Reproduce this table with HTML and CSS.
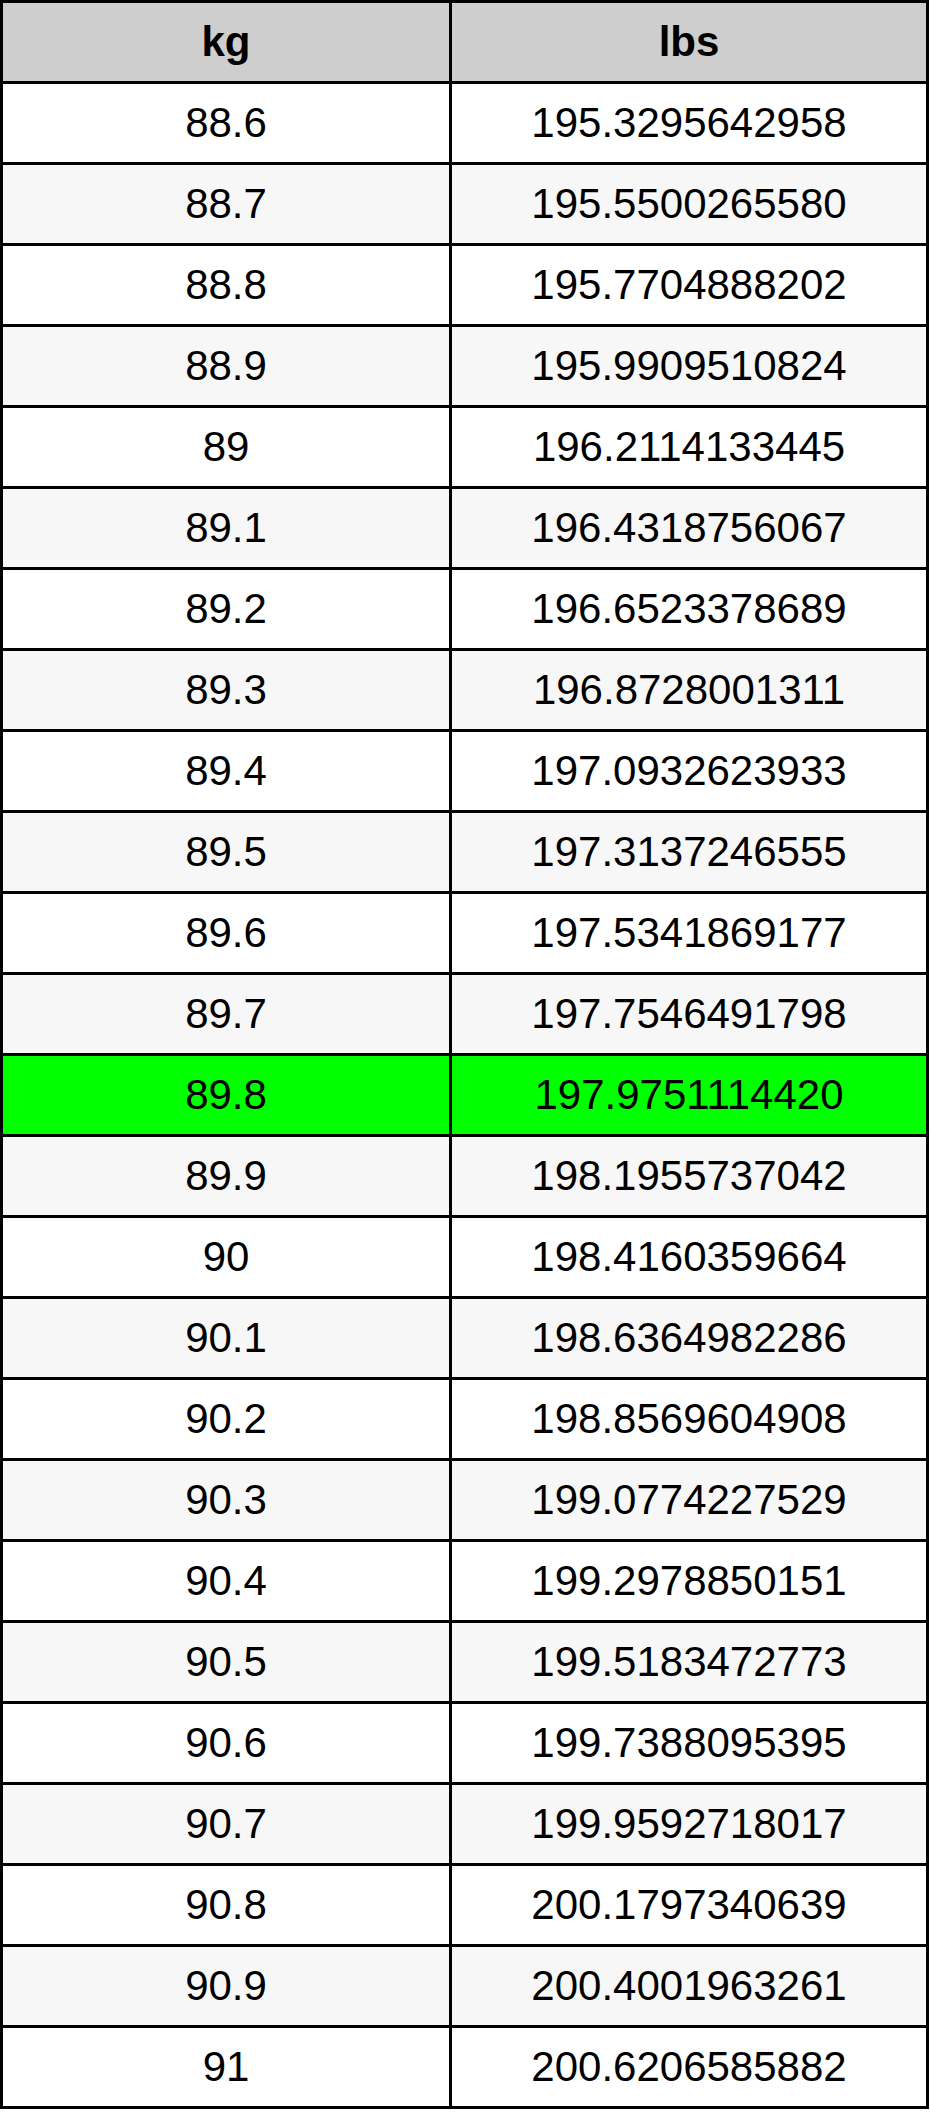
FILE: index.html
```html
<!DOCTYPE html>
<html>
<head>
<meta charset="utf-8">
<link rel="stylesheet" href="styles.css">
</head>
<body>
<div class="table">
  <div class="row head"><div class="cell">kg</div><div class="cell">lbs</div></div>
  <div class="row"><div class="cell">88.6</div><div class="cell">195.3295642958</div></div>
  <div class="row alt"><div class="cell">88.7</div><div class="cell">195.5500265580</div></div>
  <div class="row"><div class="cell">88.8</div><div class="cell">195.7704888202</div></div>
  <div class="row alt"><div class="cell">88.9</div><div class="cell">195.9909510824</div></div>
  <div class="row"><div class="cell">89</div><div class="cell">196.2114133445</div></div>
  <div class="row alt"><div class="cell">89.1</div><div class="cell">196.4318756067</div></div>
  <div class="row"><div class="cell">89.2</div><div class="cell">196.6523378689</div></div>
  <div class="row alt"><div class="cell">89.3</div><div class="cell">196.8728001311</div></div>
  <div class="row"><div class="cell">89.4</div><div class="cell">197.0932623933</div></div>
  <div class="row alt"><div class="cell">89.5</div><div class="cell">197.3137246555</div></div>
  <div class="row"><div class="cell">89.6</div><div class="cell">197.5341869177</div></div>
  <div class="row alt"><div class="cell">89.7</div><div class="cell">197.7546491798</div></div>
  <div class="row hl"><div class="cell">89.8</div><div class="cell">197.9751114420</div></div>
  <div class="row alt"><div class="cell">89.9</div><div class="cell">198.1955737042</div></div>
  <div class="row"><div class="cell">90</div><div class="cell">198.4160359664</div></div>
  <div class="row alt"><div class="cell">90.1</div><div class="cell">198.6364982286</div></div>
  <div class="row"><div class="cell">90.2</div><div class="cell">198.8569604908</div></div>
  <div class="row alt"><div class="cell">90.3</div><div class="cell">199.0774227529</div></div>
  <div class="row"><div class="cell">90.4</div><div class="cell">199.2978850151</div></div>
  <div class="row alt"><div class="cell">90.5</div><div class="cell">199.5183472773</div></div>
  <div class="row"><div class="cell">90.6</div><div class="cell">199.7388095395</div></div>
  <div class="row alt"><div class="cell">90.7</div><div class="cell">199.9592718017</div></div>
  <div class="row"><div class="cell">90.8</div><div class="cell">200.1797340639</div></div>
  <div class="row alt"><div class="cell">90.9</div><div class="cell">200.4001963261</div></div>
  <div class="row"><div class="cell">91</div><div class="cell">200.6206585882</div></div>
</div>
</body>
</html>
```

FILE: styles.css
```css
html, body {
  margin: 0;
  padding: 0;
  background: #ffffff;
}
.table {
  display: flex;
  flex-direction: column;
  gap: 3px;
  padding: 3px;
  background: #000000;
  width: 923px;
  font-family: "Liberation Sans", Arial, sans-serif;
  font-size: 42px;
  color: #000000;
}
.row {
  display: grid;
  grid-template-columns: 446px 474px;
  gap: 3px;
  height: 78px;
}
.cell {
  display: flex;
  align-items: center;
  justify-content: center;
  background: #ffffff;
}
.row.alt .cell {
  background: #f7f7f7;
}
.row.head .cell {
  background: #cecece;
  font-weight: bold;
}
.row.hl .cell {
  background: #00ff00;
}
```
